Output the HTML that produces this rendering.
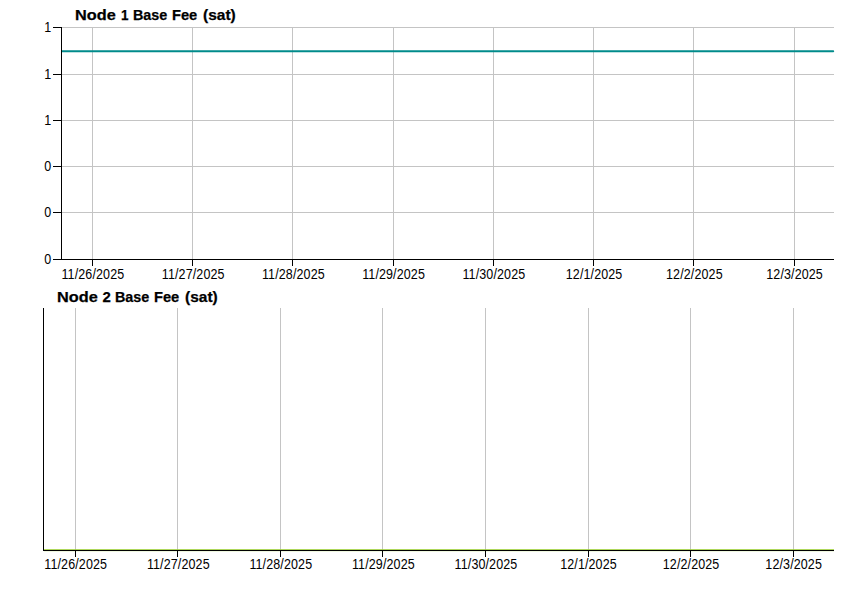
<!DOCTYPE html>
<html><head><meta charset="utf-8"><title>Base Fee</title>
<style>
html,body{margin:0;padding:0;background:#fff;}
body{width:860px;height:600px;position:relative;overflow:hidden;font-family:"Liberation Sans",sans-serif;color:#000;}
.a{position:absolute;}
.g{position:absolute;background:#c4c4c4;}
.k{position:absolute;background:#000;}
.t{position:absolute;font-weight:bold;font-size:15px;line-height:18px;white-space:nowrap;height:18px;width:170px;}
.t span{position:absolute;top:0;transform-origin:0 0;-webkit-text-stroke:0.25px #000;}
.l{position:absolute;font-size:12.5px;line-height:14px;white-space:nowrap;letter-spacing:0.12px;}
.d{text-align:center;width:80px;transform-origin:40px 11.5px;transform:translateY(1.4px) scaleY(1.1);}
.y{text-align:right;width:20px;letter-spacing:0;transform-origin:10px 7px;transform:translate(-0.7px,0.3px) scaleY(1.1);}
</style></head><body>

<div class="t" style="left:74px;top:6px"><span style="left:0.6px;transform:scaleX(1.085)">Node</span> <span style="left:47.2px;transform:scaleX(0.9)">1</span> <span style="left:59px;transform:scaleX(0.957)">Base</span> <span style="left:98.1px;transform:scaleX(0.976)">Fee</span> <span style="left:128.5px;transform:scaleX(1.033)">(sat)</span></div>
<div class="g" style="left:62px;top:27px;width:772px;height:1px"></div>
<div class="g" style="left:62px;top:74px;width:772px;height:1px"></div>
<div class="g" style="left:62px;top:120px;width:772px;height:1px"></div>
<div class="g" style="left:62px;top:166px;width:772px;height:1px"></div>
<div class="g" style="left:62px;top:212px;width:772px;height:1px"></div>
<div class="g" style="left:92px;top:27px;width:1px;height:232px"></div>
<div class="g" style="left:192px;top:27px;width:1px;height:232px"></div>
<div class="g" style="left:292px;top:27px;width:1px;height:232px"></div>
<div class="g" style="left:393px;top:27px;width:1px;height:232px"></div>
<div class="g" style="left:493px;top:27px;width:1px;height:232px"></div>
<div class="g" style="left:593px;top:27px;width:1px;height:232px"></div>
<div class="g" style="left:693px;top:27px;width:1px;height:232px"></div>
<div class="g" style="left:794px;top:27px;width:1px;height:232px"></div>
<svg class="a" style="left:0;top:40px" width="860" height="20" viewBox="0 40 860 20"><line x1="62" y1="51.2" x2="833.2" y2="51.2" stroke="#008b8b" stroke-width="2" stroke-linecap="round"/></svg>
<div class="k" style="left:61px;top:27px;width:1px;height:233px"></div>
<div class="k" style="left:53px;top:259px;width:781px;height:1px"></div>
<div class="k" style="left:53px;top:27px;width:8px;height:1px"></div>
<div class="l y" style="left:32px;top:20px">1</div>
<div class="k" style="left:53px;top:74px;width:8px;height:1px"></div>
<div class="l y" style="left:32px;top:67px">1</div>
<div class="k" style="left:53px;top:120px;width:8px;height:1px"></div>
<div class="l y" style="left:32px;top:113px">1</div>
<div class="k" style="left:53px;top:166px;width:8px;height:1px"></div>
<div class="l y" style="left:32px;top:159px">0</div>
<div class="k" style="left:53px;top:212px;width:8px;height:1px"></div>
<div class="l y" style="left:32px;top:205px">0</div>
<div class="k" style="left:53px;top:259px;width:8px;height:1px"></div>
<div class="l y" style="left:32px;top:252px">0</div>
<div class="k" style="left:92px;top:259px;width:1px;height:7px"></div>
<div class="l d" style="left:52.9px;top:267px">11/26/2025</div>
<div class="k" style="left:192px;top:259px;width:1px;height:7px"></div>
<div class="l d" style="left:153.2px;top:267px">11/27/2025</div>
<div class="k" style="left:292px;top:259px;width:1px;height:7px"></div>
<div class="l d" style="left:253.4px;top:267px">11/28/2025</div>
<div class="k" style="left:393px;top:259px;width:1px;height:7px"></div>
<div class="l d" style="left:353.6px;top:267px">11/29/2025</div>
<div class="k" style="left:493px;top:259px;width:1px;height:7px"></div>
<div class="l d" style="left:453.9px;top:267px">11/30/2025</div>
<div class="k" style="left:593px;top:259px;width:1px;height:7px"></div>
<div class="l d" style="left:554.1px;top:267px">12/1/2025</div>
<div class="k" style="left:693px;top:259px;width:1px;height:7px"></div>
<div class="l d" style="left:654.4px;top:267px">12/2/2025</div>
<div class="k" style="left:794px;top:259px;width:1px;height:7px"></div>
<div class="l d" style="left:754.6px;top:267px">12/3/2025</div>
<div class="t" style="left:56px;top:288px"><span style="left:0.6px;transform:scaleX(1.085)">Node</span> <span style="left:46.5px;transform:scaleX(1)">2</span> <span style="left:59px;transform:scaleX(0.957)">Base</span> <span style="left:98.1px;transform:scaleX(0.976)">Fee</span> <span style="left:128.5px;transform:scaleX(1.033)">(sat)</span></div>
<div class="g" style="left:75px;top:308px;width:1px;height:242px"></div>
<div class="g" style="left:177px;top:308px;width:1px;height:242px"></div>
<div class="g" style="left:280px;top:308px;width:1px;height:242px"></div>
<div class="g" style="left:382px;top:308px;width:1px;height:242px"></div>
<div class="g" style="left:485px;top:308px;width:1px;height:242px"></div>
<div class="g" style="left:588px;top:308px;width:1px;height:242px"></div>
<div class="g" style="left:690px;top:308px;width:1px;height:242px"></div>
<div class="g" style="left:793px;top:308px;width:1px;height:242px"></div>
<div class="a" style="left:44px;top:549px;width:790px;height:1px;background:rgba(154,205,50,0.8)"></div>
<div class="a" style="left:44px;top:551px;width:790px;height:1px;background:rgba(154,205,50,0.15)"></div>
<div class="k" style="left:43px;top:308px;width:1px;height:243px"></div>
<div class="k" style="left:43px;top:550px;width:791px;height:1px"></div>
<div class="k" style="left:75px;top:550px;width:1px;height:7px"></div>
<div class="l d" style="left:35.7px;top:557px">11/26/2025</div>
<div class="k" style="left:177px;top:550px;width:1px;height:7px"></div>
<div class="l d" style="left:138.3px;top:557px">11/27/2025</div>
<div class="k" style="left:280px;top:550px;width:1px;height:7px"></div>
<div class="l d" style="left:240.8px;top:557px">11/28/2025</div>
<div class="k" style="left:382px;top:550px;width:1px;height:7px"></div>
<div class="l d" style="left:343.4px;top:557px">11/29/2025</div>
<div class="k" style="left:485px;top:550px;width:1px;height:7px"></div>
<div class="l d" style="left:446.0px;top:557px">11/30/2025</div>
<div class="k" style="left:588px;top:550px;width:1px;height:7px"></div>
<div class="l d" style="left:548.5px;top:557px">12/1/2025</div>
<div class="k" style="left:690px;top:550px;width:1px;height:7px"></div>
<div class="l d" style="left:651.1px;top:557px">12/2/2025</div>
<div class="k" style="left:793px;top:550px;width:1px;height:7px"></div>
<div class="l d" style="left:753.7px;top:557px">12/3/2025</div>
</body></html>
